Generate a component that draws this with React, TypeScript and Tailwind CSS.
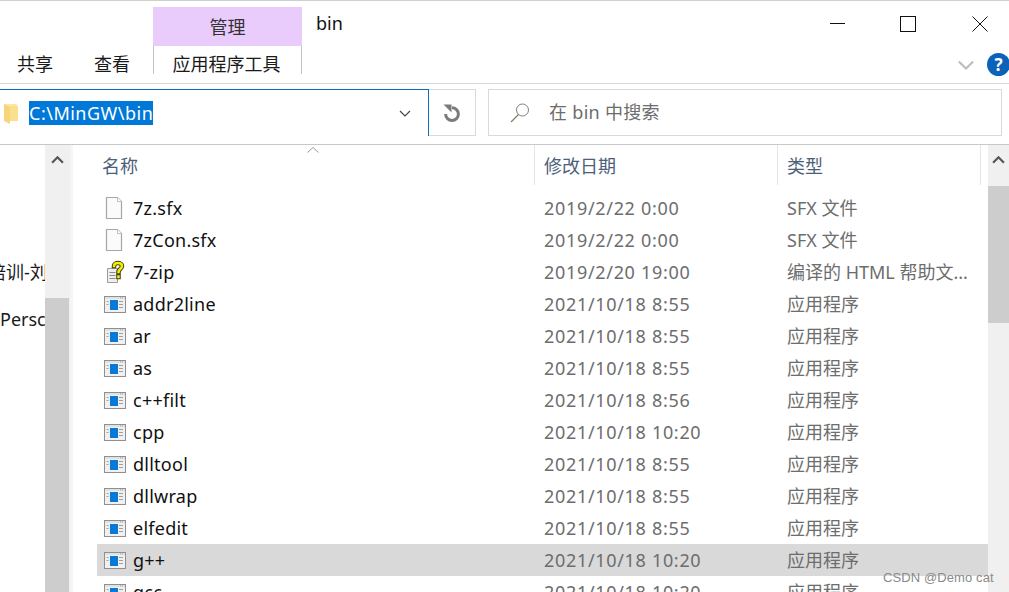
const rows = [
  { name: "7z.sfx", date: "2019/2/22 0:00", type: "SFX 文件", icon: "file" },
  { name: "7zCon.sfx", date: "2019/2/22 0:00", type: "SFX 文件", icon: "file" },
  { name: "7-zip", date: "2019/2/20 19:00", type: "编译的 HTML 帮助文...", icon: "help" },
  { name: "addr2line", date: "2021/10/18 8:55", type: "应用程序", icon: "exe" },
  { name: "ar", date: "2021/10/18 8:55", type: "应用程序", icon: "exe" },
  { name: "as", date: "2021/10/18 8:55", type: "应用程序", icon: "exe" },
  { name: "c++filt", date: "2021/10/18 8:56", type: "应用程序", icon: "exe" },
  { name: "cpp", date: "2021/10/18 10:20", type: "应用程序", icon: "exe" },
  { name: "dlltool", date: "2021/10/18 8:55", type: "应用程序", icon: "exe" },
  { name: "dllwrap", date: "2021/10/18 8:55", type: "应用程序", icon: "exe" },
  { name: "elfedit", date: "2021/10/18 8:55", type: "应用程序", icon: "exe" },
  { name: "g++", date: "2021/10/18 10:20", type: "应用程序", icon: "exe", selected: true },
  { name: "gcc", date: "2021/10/18 10:20", type: "应用程序", icon: "exe" },
];

function ExeIcon() {
  return (
    <svg width="23" height="24" viewBox="0 0 23 24">
      <rect x="0.5" y="4.5" width="21" height="16" fill="#f0f0f0" stroke="#8f8f8f" />
      <rect x="1" y="5" width="20" height="2" fill="#e2e2e2" />
      <path d="M16 6h1M18 6h1" stroke="#9a9a9a" />
      <rect x="6" y="8" width="8" height="10" fill="#0a78d7" />
      <path d="M15 9.5h4M15 12.5h4M15 15.5h4M2.5 9.5h2M2.5 12.5h2" stroke="#a0a0a0" />
    </svg>
  );
}

function FileIcon() {
  return (
    <svg width="23" height="24" viewBox="0 0 23 24">
      <path d="M2.5 1.5h11l4 4v17h-15z" fill="#fbfbfb" stroke="#a6a6a6" strokeWidth="1.2" />
      <path d="M13.5 1.5v4h4" fill="#fff" stroke="#c0c0c0" />
    </svg>
  );
}

function HelpIcon() {
  return (
    <svg width="23" height="24" viewBox="0 0 23 24">
      <path d="M3.5 8.5h10v14h-10z" fill="#eeeeee" stroke="#9a9a9a" />
      <path d="M5.5 12.5h6M5.5 15.5h6M5.5 18.5h6" stroke="#8a8a8a" />
      <g fill="none" strokeLinecap="square">
        <path d="M10 6c0-4 8-4 8 0 0 3-3.500 3-3.500 6M14.500 16.500v.5" stroke="#3c3c10" strokeWidth="4.500" />
        <path d="M10 6c0-4 8-4 8 0 0 3-3.500 3-3.500 6M14.500 16.500v.5" stroke="#f7ee00" strokeWidth="2.500" />
      </g>
    </svg>
  );
}

function Chevron({ className, color = "#5f5f5f", width = 2 }: { className?: string; color?: string; width?: number }) {
  return (
    <svg className={className} viewBox="0 0 12 7" fill="none">
      <path d="M1 6l5-5 5 5" stroke={color} strokeWidth={width} />
    </svg>
  );
}

export default function App() {
  return (
    <div className="relative flex h-[592px] w-[1009px] flex-col overflow-hidden bg-white font-['Noto_Sans','Noto_Sans_CJK_SC',sans-serif] text-[18px] text-[#1a1a1a]">
      {/* ribbon */}
      <div className="h-[84px] shrink-0 border-t border-b border-t-[#cfcfcf] border-b-[#d9d9d9]">
        <div className="flex h-[45px]">
          <div className="w-[153px]" />
          <div className="mt-[6px] flex w-[149px] items-center justify-center bg-[#e9cbfc] pt-[1px] text-[#333]">管理</div>
          <div className="ml-[14px] pt-[9px] text-[#111]">bin</div>
          <div className="ml-auto flex pt-[15px]">
            <svg width="16" height="16" viewBox="0 0 16 16" className="mr-[54px]"><path d="M0 7.500h15" stroke="#111" /></svg>
            <div className="mr-[56px] h-[16px] w-[16px] border border-[#111]" />
            <svg width="16" height="16" viewBox="0 0 16 16" className="mr-[21px]"><path d="M.5 .5l15 15M15.500 .5l-15 15" stroke="#111" /></svg>
          </div>
        </div>
        <div className="flex h-[37px] items-start">
          <div className="ml-[17px] mt-[5px] leading-[26px]">共享</div>
          <div className="ml-[41px] mt-[5px] leading-[26px]">查看</div>
          <div className="ml-[23px] h-[28px] w-[149px] border-x border-[#c4c4c4] pr-[2px] pt-[5px] text-center leading-[26px]">应用程序工具</div>
          <div className="ml-auto flex items-center pt-[7px]">
            <Chevron className="mr-[12px] h-[10px] w-[18px] rotate-180" color="#bcbcbc" width={1.4} />
            <div className="mr-[-1px] flex h-[23px] w-[23px] items-center justify-center rounded-full bg-[#0b62b8] text-[17px] font-bold leading-none text-white">?</div>
          </div>
        </div>
      </div>

      {/* address bar */}
      <div className="mt-[5px] flex h-[47px] shrink-0">
        <div className="flex w-[429px] items-center border-t border-r border-[#0a6fc4]">
          <svg width="16" height="21" viewBox="0 0 16 21" className="ml-[3px]">
            <path d="M1 1h13v3h1v14H6z" fill="#fbe7a6" />
            <path d="M6 3h9v15H6z" fill="#fadf8c" />
            <path d="M1 1l6 3v17l-6-3z" fill="#f7d57a" />
          </svg>
          <div className="ml-[10px] bg-[#0078d7] text-[18px] leading-[24px] tracking-[0.5px] text-white">C:\MinGW\bin</div>
          <svg width="12" height="7" viewBox="0 0 12 7" fill="none" className="ml-auto mr-[17px]"><path d="M1 1l5 5 5-5" stroke="#444" strokeWidth="1.2" /></svg>
        </div>
        <div className="flex w-[47px] items-center justify-center border border-l-0 border-[#d9d9d9]">
          <svg width="18" height="18" viewBox="0 0 18 18" fill="none">
            <path d="M9 3.700a6.400 6.400 0 1 1-6.400 6.400" stroke="#7b7b7b" strokeWidth="3" />
            <path d="M0.500 0.500h8v8z" fill="#7b7b7b" />
          </svg>
        </div>
        <div className="ml-[12px] flex w-[514px] items-center border border-[#d9d9d9] text-[#6d6d6d]">
          <svg width="20" height="20" viewBox="0 0 20 20" fill="none" className="ml-[21px]">
            <circle cx="12.500" cy="7" r="6" stroke="#7f7f7f" />
            <path d="M8.500 11.500L1 19" stroke="#8a7a6a" strokeWidth="1.200" />
          </svg>
          <span className="ml-[19px] tracking-[0.3px]">在 bin 中搜索</span>
        </div>
      </div>

      {/* body */}
      <div className="mt-[8px] flex min-h-0 flex-1 border-t border-[#c8c8c8]">
        <div className="w-[45px] shrink-0 overflow-hidden whitespace-nowrap">
          <div className="ml-[-12px] mt-[113px] leading-[28px]">培训-刘</div>
          <div className="mt-[19px] leading-[28px]">Persc</div>
        </div>
        <div className="flex w-[25px] shrink-0 flex-col bg-[#f0f0f0]">
          <div className="flex h-[153px] justify-center pt-[11px]">
            <Chevron className="h-[8px] w-[13px]" color="#555" />
          </div>
          <div className="w-[24px] flex-1 bg-[#cdcdcd]" />
        </div>
        <div className="w-[3px] shrink-0 bg-[#f5f5f5]" />

        <div className="relative flex min-w-0 flex-1 flex-col pl-[24px]">
          <svg width="12" height="6" viewBox="0 0 12 6" fill="none" className="absolute left-[234px] top-[2px]"><path d="M.5 5.500l5.500-5 5.500 5" stroke="#9a9a9a" /></svg>
          <div className="flex h-[40px] shrink-0 text-[#4c607a]">
            <div className="w-[438px] border-r border-[#e5e5e5] pl-[5px] pt-[7px] leading-[28px]">名称</div>
            <div className="w-[243px] border-r border-[#e5e5e5] pl-[9px] pt-[7px] leading-[28px]">修改日期</div>
            <div className="w-[203px] border-r border-[#e5e5e5] pl-[9px] pt-[7px] leading-[28px]">类型</div>
          </div>
          <div className="mt-[7px]">
            {rows.map((row) => (
              <div key={row.name} className={`flex h-[32px] items-center ${row.selected ? "bg-[#d9d9d9]" : ""}`}>
                <div className="w-[36px] shrink-0 pl-[7px]">
                  {row.icon === "exe" && <ExeIcon />}
                  {row.icon === "file" && <FileIcon />}
                  {row.icon === "help" && <HelpIcon />}
                </div>
                <div className="w-[411px] shrink-0 tracking-[0.25px] text-[#111]">{row.name}</div>
                <div className="w-[243px] shrink-0 tracking-[0.68px] text-[#6d6d6d]">{row.date}</div>
                <div className="whitespace-nowrap text-[#6d6d6d]">{row.type}</div>
              </div>
            ))}
          </div>
        </div>

        <div className="flex w-[21px] shrink-0 flex-col bg-[#f0f0f0]">
          <div className="flex h-[41px] justify-center pt-[11px]">
            <Chevron className="h-[8px] w-[13px]" color="#555" />
          </div>
          <div className="h-[137px] bg-[#cdcdcd]" />
        </div>
      </div>

      <div className="absolute left-[883px] top-[569px] font-['Liberation_Sans',sans-serif] text-[13px] leading-[18px] tracking-[0.1px] text-[#8a8a8a]">CSDN @Demo cat</div>
    </div>
  );
}
